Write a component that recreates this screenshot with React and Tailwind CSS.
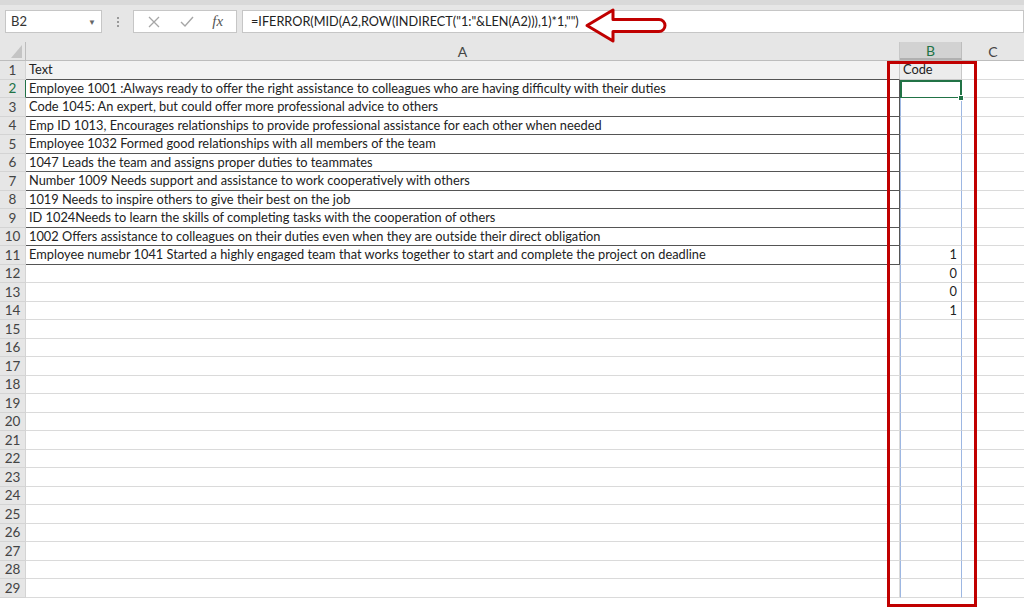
import React from 'react';

const rows = [
  'Text',
  'Employee 1001 :Always ready to offer the right assistance to colleagues who are having difficulty with their duties',
  'Code 1045: An expert, but could offer more professional advice to others',
  'Emp ID 1013, Encourages relationships to provide professional assistance for each other when needed',
  'Employee 1032 Formed good relationships with all members of the team',
  '1047 Leads the team and assigns proper duties to teammates',
  'Number 1009 Needs support and assistance to work cooperatively with others',
  '1019 Needs to inspire others to give their best on the job',
  'ID 1024Needs to learn the skills of completing tasks with the cooperation of others',
  '1002 Offers assistance to colleagues on their duties even when they are outside their direct obligation',
  'Employee numebr 1041 Started a highly engaged team that works together to start and complete the project on deadline',
];

const codes = { 1: 'Code', 11: '1', 12: '0', 13: '0', 14: '1' };

function Row({ n }) {
  const text = rows[n - 1] || '';
  const boxed = n >= 2 && n <= 11;
  const head = n === 1;
  return (
    <div className="flex h-[18.5px]">
      <div
        className={`w-[26px] shrink-0 flex items-center justify-center border-b border-r border-[#d4d4d4] bg-[#e6e6e6] text-[13.5px] ${
          n === 2 ? 'text-[#217346] border-r-[#217346]' : 'text-[#444]'
        }`}
      >
        {n}
      </div>
      <div
        className={`w-[874px] shrink-0 flex items-center pl-[3px] text-[12.8px] text-[#222] whitespace-nowrap overflow-visible ${
          boxed ? 'border-b border-[#555] border-r border-r-[#555]' : head ? 'border-b border-[#555] bg-[#f2f2f2] border-r border-r-[#c8c8c8]' : 'border-b border-r border-[#dadada]'
        }`}
      >
        {text}
      </div>
      <div
        className={`w-[62px] shrink-0 flex items-center text-[12.8px] text-[#222] border-b ${
          head
            ? 'bg-[#ececec] border-[#c8c8c8] border-r pl-[3px]'
            : n === 2
              ? 'border-2 border-[#217346] relative'
              : 'justify-end pr-[4px] border-[#dadada] border-r-[#9db7e2] border-l border-l-[#9db7e2] border-r'
        }`}
      >
        {n === 2 && <span className="absolute right-[-4px] bottom-[-4px] w-[6px] h-[6px] bg-[#217346] border border-white" />}
        {n !== 2 && codes[n]}
      </div>
      <div className="flex-1 border-b border-[#dadada]" />
    </div>
  );
}

export default function App() {
  const nums = Array.from({ length: 29 }, (_, i) => i + 1);
  return (
    <div
      className="relative w-[1024px] h-[608px] bg-white overflow-hidden"
      style={{ fontFamily: 'Lato, "Open Sans", sans-serif' }}
    >
      {/* formula bar */}
      <div className="h-[42px] bg-[#e6e6e6] border-t-[5px] border-[#d9d9d9] flex items-start pt-[5px] pl-[5px]">
        <div className="w-[97px] h-[23px] bg-white border border-[#c6c6c6] flex items-center justify-between px-[5px] text-[13px] text-[#333]">
          <span>B2</span>
          <span className="text-[8px] text-[#666]">▼</span>
        </div>
        <div className="w-[31px] h-[23px] flex flex-col items-center justify-center gap-[2px]">
          <span className="w-[2px] h-[2px] bg-[#999]" />
          <span className="w-[2px] h-[2px] bg-[#999]" />
          <span className="w-[2px] h-[2px] bg-[#999]" />
        </div>
        <div className="w-[104px] h-[23px] bg-white border border-[#c6c6c6] flex items-center justify-around px-[4px]">
          <svg width="14" height="14" viewBox="0 0 14 14" fill="none" stroke="#a6a6a6" strokeWidth="1.3">
            <path d="M2 2l10 10M12 2L2 12" />
          </svg>
          <svg width="16" height="14" viewBox="0 0 16 14" fill="none" stroke="#a6a6a6" strokeWidth="1.4">
            <path d="M2 7l4 4 8-9" />
          </svg>
          <span className="italic text-[15px] text-[#555]" style={{ fontFamily: '"Liberation Serif", serif' }}>
            fx
          </span>
        </div>
        <div className="ml-[5px] flex-1 h-[23px] bg-white border border-[#c6c6c6] flex items-center pl-[8px] text-[12.7px] text-[#222]">
          =IFERROR(MID(A2,ROW(INDIRECT("1:"&amp;LEN(A2))),1)*1,"")
        </div>
      </div>

      {/* column headers */}
      <div className="flex h-[19px] bg-[#e6e6e6] border-b border-[#bdbdbd] text-[14px] text-[#444]">
        <div className="w-[26px] shrink-0 border-r border-[#bdbdbd] flex items-end justify-end pr-[3px] pb-[2px]">
          <svg width="11" height="13" viewBox="0 0 11 13">
            <path d="M11 0L11 13L0 13Z" fill="#c4c4c4" />
          </svg>
        </div>
        <div className="w-[874px] shrink-0 border-r border-[#c8c8c8] flex items-center justify-center">A</div>
        <div className="w-[62px] shrink-0 bg-[#d2d2d2] border-r border-[#bdbdbd] border-b-2 border-b-[#b0b0b0] flex items-center justify-center text-[#217346]">
          B
        </div>
        <div className="flex-1 flex items-center justify-center">C</div>
      </div>

      {/* grid */}
      <div>
        {nums.map((n) => (
          <Row key={n} n={n} />
        ))}
      </div>

      {/* red highlight box */}
      <div className="absolute left-[887px] top-[61px] w-[90px] h-[546px] border-[3px] border-[#c00000]" />

      {/* red arrow */}
      <svg className="absolute left-[584px] top-[7px]" width="84" height="37" viewBox="0 0 84 37" fill="white" stroke="#c00000" strokeWidth="3" strokeLinejoin="round">
        <path d="M3 18.5L29 3V12.5H75a6 6 0 0 1 0 12H29V34Z" />
      </svg>
    </div>
  );
}
